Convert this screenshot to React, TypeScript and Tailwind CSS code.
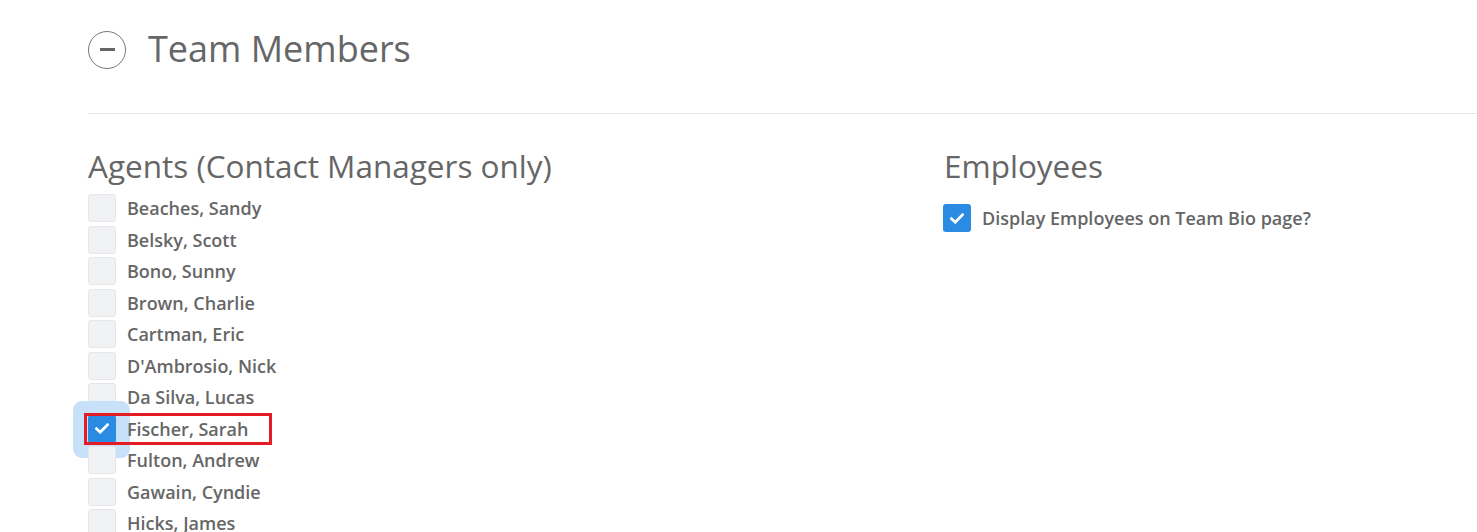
import React from "react";

const agents = [
  "Beaches, Sandy",
  "Belsky, Scott",
  "Bono, Sunny",
  "Brown, Charlie",
  "Cartman, Eric",
  "D'Ambrosio, Nick",
  "Da Silva, Lucas",
  "Fischer, Sarah",
  "Fulton, Andrew",
  "Gawain, Cyndie",
  "Hicks, James",
];

function Check() {
  return (
    <svg width="14" height="11" viewBox="0 0 14 11" fill="none">
      <path d="M1.5 5.8 L5.2 9.2 L12.5 1.8" stroke="#fff" strokeWidth="2.8" strokeLinecap="square" />
    </svg>
  );
}

function Box({ checked, focused }: { checked?: boolean; focused?: boolean }) {
  return (
    <div className="relative w-[28px] h-[28px] shrink-0">
      {focused && (
        <div className="absolute -left-[15px] -top-[14px] w-[57px] h-[57px] rounded-[9px] bg-[#c7e1f8]" />
      )}
      <div
        className={
          checked
            ? "relative w-[28px] h-[28px] rounded-[3px] bg-[#2a8be3] flex items-center justify-center"
            : "relative w-[28px] h-[28px] rounded-[3px] bg-[#f1f2f4] border border-[#e6e7ea]"
        }
      >
        {checked && <Check />}
      </div>
    </div>
  );
}

export default function App() {
  return (
    <div
      className="w-[1477px] h-[532px] overflow-hidden bg-white text-[#666]"
      style={{ fontFamily: '"Open Sans", "Noto Sans", sans-serif' }}
    >
      <div className="pl-[88px]">
        <div className="flex items-center gap-[22px] h-[96px] pt-[3px]">
          <div className="w-[38px] h-[38px] rounded-full border-[1.5px] border-[#777] flex items-center justify-center">
            <div className="w-[15px] h-[3px] bg-[#666]" />
          </div>
          <h1 className="text-[36px] leading-[40px] font-normal text-[#666] -mt-[2px]">Team Members</h1>
        </div>
        <div className="mt-[17px] h-px bg-[#e6e6e6]" />
        <div className="flex mt-[31px]">
          <div className="w-[856px]">
            <h2 className="text-[31.5px] leading-[40px] font-normal text-[#666] mt-[1px]">Agents (Contact Managers only)</h2>
            <div className="mt-[8px] flex flex-col gap-[3.5px] relative">
              {agents.map((a) => (
                <div key={a} className="flex items-center gap-[11px] h-[28px]">
                  <Box checked={a === "Fischer, Sarah"} focused={a === "Fischer, Sarah"} />
                  <span className="relative text-[18px] leading-[28px] font-semibold text-[#666]">{a}</span>
                </div>
              ))}
              <div className="absolute left-[-4px] top-[219px] w-[188px] h-[32px] border-[3px] border-[#e41c24]" />
            </div>
          </div>
          <div>
            <h2 className="text-[31.5px] leading-[40px] font-normal text-[#666] mt-[1px]">Employees</h2>
            <div className="mt-[18px] flex items-center gap-[11px] -ml-px">
              <Box checked />
              <span className="text-[18px] leading-[28px] font-semibold text-[#666]">
                Display Employees on Team Bio page?
              </span>
            </div>
          </div>
        </div>
      </div>
    </div>
  );
}
